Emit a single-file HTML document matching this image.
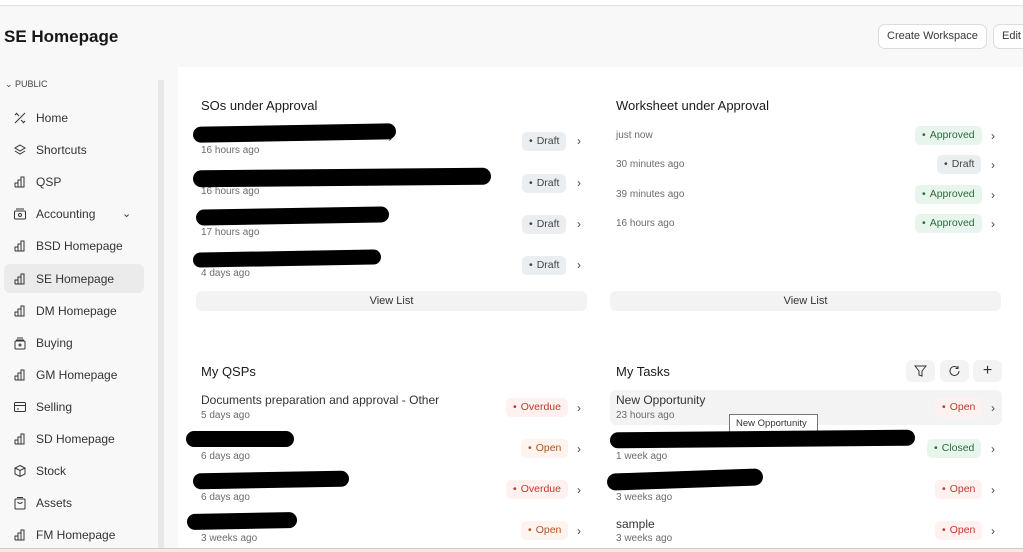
<!DOCTYPE html>
<html><head><meta charset="utf-8"><style>
*{box-sizing:border-box;margin:0;padding:0}
body{width:1023px;height:552px;overflow:hidden;background:#f8f8f8;font-family:"Liberation Sans",Arial,sans-serif;color:#1f272e;position:relative}
.a{position:absolute}
.top{left:0;top:0;width:1023px;height:6px;background:#fff;border-bottom:1px solid #e2e2e2}
h1{position:absolute;left:4px;top:27px;font-size:17px;font-weight:bold;color:#171717}
.btn{position:absolute;top:24px;height:25px;border:1px solid #dcdcdc;border-radius:7px;background:#fff;font-size:11px;color:#383838;line-height:23px;padding:0 8px}
.side-item{position:absolute;left:4px;width:140px;height:29px;font-size:12px;color:#333;line-height:30px;padding-left:32px}
.side-item svg{position:absolute;left:9px;top:8px}
.act{background:#ebebeb;border-radius:6px}
.main{left:178px;top:67px;width:845px;height:481px;background:#fff}
.ttl{position:absolute;font-size:13px;color:#1a1a1a}
.tm{position:absolute;font-size:10px;color:#6b6b6b}
.bd{position:absolute;height:19px;border-radius:5px;font-size:10.5px;line-height:19px;padding:0 7px 0 7px}
.bd:before{content:"•";margin-right:4px}
.dr{background:#ebeef0;color:#444}
.ap{background:#e8f5ec;color:#2d6b3e}
.ov{background:#fff1f0;color:#c0392b}
.op{background:#fff3ef;color:#b0541a}
.opr{background:#fff1f0;color:#c0392b}
.cl{background:#e8f5ec;color:#2d6b3e}
.chev{position:absolute;font-size:12px;color:#444}
.vl{position:absolute;height:20px;background:#f3f3f3;border-radius:6px;font-size:11px;color:#333;text-align:center;line-height:20px}
.blk{position:absolute;background:#000;border-radius:10px}
.ib{position:absolute;top:360px;width:29px;height:22px;background:#f3f3f3;border-radius:6px}
</style></head><body>
<div class="a top"></div>
<h1>SE Homepage</h1>
<div class="btn" style="left:878px;">Create Workspace</div>
<div class="btn" style="left:993px;width:40px;">Edit</div>

<div class="a" style="left:5px;top:79px;font-size:9px;color:#444">⌄ PUBLIC</div>
<div class="a" style="left:158px;top:80px;width:6px;height:468px;background:#e8e8e8"></div>

<div class="side-item" style="top:103px"><svg width="14" height="14" viewBox="0 0 14 14" fill="none" stroke="#333" stroke-width="1"><path d="M2 12L12 2M3 2l3 3M8 9l3 3M2 4l2-2M10 12l2-2"/></svg>Home</div>
<div class="side-item" style="top:135px"><svg width="14" height="14" viewBox="0 0 14 14" fill="none" stroke="#333"><path d="M7 2l5 3-5 3-5-3zM2 8l5 3 5-3"/></svg>Shortcuts</div>
<div class="side-item" style="top:167px"><svg width="14" height="14" viewBox="0 0 14 14" fill="none" stroke="#333"><path d="M2 12V8h3v4M5 12V5h3v7M8 12V2h3v10H2"/></svg>QSP</div>
<div class="side-item" style="top:199px"><svg width="14" height="14" viewBox="0 0 14 14" fill="none" stroke="#333"><rect x="1.5" y="4" width="11" height="8" rx="1"/><path d="M3 2h8"/><circle cx="7" cy="8" r="1.5"/></svg>Accounting<span style="position:absolute;left:118px;font-size:11px">⌄</span></div>
<div class="side-item" style="top:231px"><svg width="14" height="14" viewBox="0 0 14 14" fill="none" stroke="#333"><path d="M2 12V8h3v4M5 12V5h3v7M8 12V2h3v10H2"/></svg>BSD Homepage</div>
<div class="side-item act" style="top:264px"><svg width="14" height="14" viewBox="0 0 14 14" fill="none" stroke="#333"><path d="M2 12V8h3v4M5 12V5h3v7M8 12V2h3v10H2"/></svg>SE Homepage</div>
<div class="side-item" style="top:296px"><svg width="14" height="14" viewBox="0 0 14 14" fill="none" stroke="#333"><path d="M2 12V8h3v4M5 12V5h3v7M8 12V2h3v10H2"/></svg>DM Homepage</div>
<div class="side-item" style="top:328px"><svg width="14" height="14" viewBox="0 0 14 14" fill="none" stroke="#333"><rect x="2" y="5" width="10" height="8" rx="1"/><path d="M4 2h6M3 4h8"/><circle cx="7" cy="9" r="1"/></svg>Buying</div>
<div class="side-item" style="top:360px"><svg width="14" height="14" viewBox="0 0 14 14" fill="none" stroke="#333"><path d="M2 12V8h3v4M5 12V5h3v7M8 12V2h3v10H2"/></svg>GM Homepage</div>
<div class="side-item" style="top:392px"><svg width="14" height="14" viewBox="0 0 14 14" fill="none" stroke="#333"><rect x="1.5" y="2.5" width="11" height="9" rx="1"/><path d="M1.5 5.5h11M4 9h2"/></svg>Selling</div>
<div class="side-item" style="top:424px"><svg width="14" height="14" viewBox="0 0 14 14" fill="none" stroke="#333"><path d="M2 12V8h3v4M5 12V5h3v7M8 12V2h3v10H2"/></svg>SD Homepage</div>
<div class="side-item" style="top:456px"><svg width="14" height="14" viewBox="0 0 14 14" fill="none" stroke="#333"><path d="M7 1.5l5 2.5v6l-5 2.5-5-2.5V4zM2 4l5 2.5L12 4M7 6.5v6"/></svg>Stock</div>
<div class="side-item" style="top:488px"><svg width="14" height="14" viewBox="0 0 14 14" fill="none" stroke="#333"><rect x="2" y="3" width="10" height="10" rx="1"/><path d="M4 1.5h6M4.5 6q2.5 3 5 0"/></svg>Assets</div>
<div class="side-item" style="top:520px"><svg width="14" height="14" viewBox="0 0 14 14" fill="none" stroke="#333"><path d="M2 12V8h3v4M5 12V5h3v7M8 12V2h3v10H2"/></svg>FM Homepage</div>

<div class="a main"></div>
<div class="a" style="left:0;top:548px;width:1023px;height:4px;background:#f3ece6;border-top:1px solid #d8c8b8"></div>

<div class="ttl" style="left:201px;top:98px">SOs under Approval</div>
<div class="tm" style="left:201px;top:145px">16 hours ago</div>
<div class="a" style="left:385px;top:127px;font-size:12px;color:#333">ty</div>
<div class="blk" style="left:193px;top:125px;width:203px;height:16px;transform:rotate(-1deg)"></div>
<div class="tm" style="left:201px;top:186px">16 hours ago</div>
<div class="blk" style="left:193px;top:169px;width:298px;height:17px;transform:rotate(-.5deg)"></div>
<div class="tm" style="left:201px;top:227px">17 hours ago</div>
<div class="blk" style="left:196px;top:208px;width:193px;height:16px;transform:rotate(-1deg)"></div>
<div class="tm" style="left:201px;top:268px">4 days ago</div>
<div class="blk" style="left:193px;top:251px;width:188px;height:15px;transform:rotate(-1deg)"></div>
<div class="bd dr" style="left:522px;top:132px">Draft</div><div class="chev" style="left:577px;top:134px">›</div>
<div class="bd dr" style="left:522px;top:174px">Draft</div><div class="chev" style="left:577px;top:176px">›</div>
<div class="bd dr" style="left:522px;top:215px">Draft</div><div class="chev" style="left:577px;top:217px">›</div>
<div class="bd dr" style="left:522px;top:256px">Draft</div><div class="chev" style="left:577px;top:258px">›</div>
<div class="vl" style="left:196px;top:291px;width:391px">View List</div>

<div class="ttl" style="left:616px;top:98px">Worksheet under Approval</div>
<div class="tm" style="left:616px;top:130px">just now</div>
<div class="tm" style="left:616px;top:159px">30 minutes ago</div>
<div class="tm" style="left:616px;top:189px">39 minutes ago</div>
<div class="tm" style="left:616px;top:218px">16 hours ago</div>
<div class="bd ap" style="left:915px;top:126px">Approved</div><div class="chev" style="left:991px;top:129px">›</div>
<div class="bd dr" style="left:937px;top:155px">Draft</div><div class="chev" style="left:991px;top:158px">›</div>
<div class="bd ap" style="left:915px;top:185px">Approved</div><div class="chev" style="left:991px;top:188px">›</div>
<div class="bd ap" style="left:915px;top:214px">Approved</div><div class="chev" style="left:991px;top:217px">›</div>
<div class="vl" style="left:610px;top:291px;width:391px">View List</div>

<div class="ttl" style="left:201px;top:364px">My QSPs</div>
<div class="a" style="left:201px;top:393px;font-size:12px;color:#333">Documents preparation and approval - Other</div>
<div class="tm" style="left:201px;top:410px">5 days ago</div>
<div class="tm" style="left:201px;top:451px">6 days ago</div>
<div class="blk" style="left:186px;top:431px;width:108px;height:16px"></div>
<div class="tm" style="left:201px;top:492px">6 days ago</div>
<div class="blk" style="left:193px;top:472px;width:156px;height:16px;transform:rotate(-1deg)"></div>
<div class="tm" style="left:201px;top:533px">3 weeks ago</div>
<div class="blk" style="left:187px;top:513px;width:110px;height:16px;transform:rotate(-1deg)"></div>
<div class="bd ov" style="left:506px;top:398px">Overdue</div><div class="chev" style="left:577px;top:401px">›</div>
<div class="bd op" style="left:521px;top:439px">Open</div><div class="chev" style="left:577px;top:442px">›</div>
<div class="bd ov" style="left:506px;top:480px">Overdue</div><div class="chev" style="left:577px;top:483px">›</div>
<div class="bd op" style="left:521px;top:521px">Open</div><div class="chev" style="left:577px;top:524px">›</div>

<div class="ttl" style="left:616px;top:364px">My Tasks</div>
<div class="ib" style="left:906px"><svg class="a" style="left:8px;top:5px" width="13" height="12" viewBox="0 0 13 12" fill="none" stroke="#333"><path d="M1 1h11L8 6v5L5 10V6z"/></svg></div>
<div class="ib" style="left:940px"><svg class="a" style="left:8px;top:5px" width="13" height="12" viewBox="0 0 13 12" fill="none" stroke="#333"><path d="M11 6a4.5 4.5 0 1 1-1.5-3.4M10 1v2.5H7.5"/></svg></div>
<div class="ib" style="left:973px;font-size:16px;text-align:center;line-height:21px;color:#333">+</div>
<div class="a" style="left:610px;top:390px;width:392px;height:35px;background:#f3f3f3;border-radius:6px"></div>
<div class="a" style="left:616px;top:393px;font-size:12px;color:#333">New Opportunity</div>
<div class="tm" style="left:616px;top:410px">23 hours ago</div>
<div class="a" style="left:729px;top:414px;width:89px;height:20px;background:#fff;border:1px solid #777;font-size:9.5px;line-height:18px;padding-left:6px;color:#333">New Opportunity</div>
<div class="tm" style="left:616px;top:451px">1 week ago</div>
<div class="blk" style="left:610px;top:431px;width:305px;height:16px;transform:rotate(-.5deg)"></div>
<div class="tm" style="left:616px;top:492px">3 weeks ago</div>
<div class="blk" style="left:607px;top:471px;width:156px;height:17px;transform:rotate(-2deg)"></div>
<div class="a" style="left:616px;top:517px;font-size:12px;color:#333">sample</div>
<div class="tm" style="left:616px;top:533px">3 weeks ago</div>
<div class="bd opr" style="left:935px;top:398px">Open</div><div class="chev" style="left:991px;top:401px">›</div>
<div class="bd cl" style="left:927px;top:439px">Closed</div><div class="chev" style="left:991px;top:442px">›</div>
<div class="bd opr" style="left:935px;top:480px">Open</div><div class="chev" style="left:991px;top:483px">›</div>
<div class="bd opr" style="left:935px;top:521px">Open</div><div class="chev" style="left:991px;top:524px">›</div>
</body></html>
